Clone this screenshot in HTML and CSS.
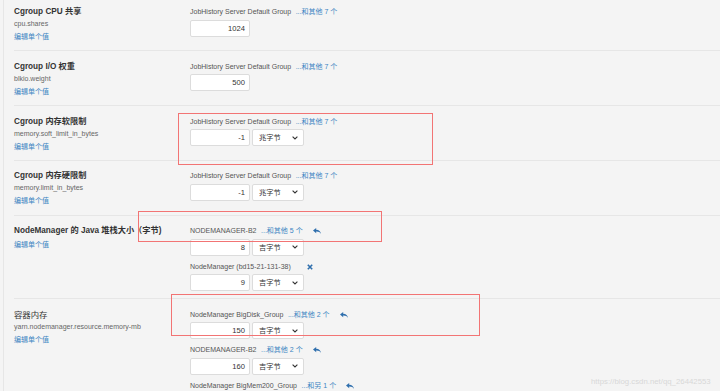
FILE: index.html
```html
<!DOCTYPE html>
<html lang="zh">
<head>
<meta charset="utf-8">
<title>配置</title>
<link rel="stylesheet" href="styles.css">
</head>
<body>
<div class="page">
  <div class="list">
    <div class="row">
      <div class="meta">
        <div class="title">Cgroup CPU 共享</div>
        <div class="key">cpu.shares</div>
        <a class="edit">编辑单个值</a>
      </div>
      <div class="values">
        <div class="entry">
          <div class="elabel"><span class="gname">JobHistory Server Default Group</span><a class="more">...和其他 7 个</a></div>
          <div class="controls"><div class="num">1024</div></div>
        </div>
      </div>
    </div>

    <div class="row">
      <div class="meta">
        <div class="title">Cgroup I/O 权重</div>
        <div class="key">blkio.weight</div>
        <a class="edit">编辑单个值</a>
      </div>
      <div class="values">
        <div class="entry">
          <div class="elabel"><span class="gname">JobHistory Server Default Group</span><a class="more">...和其他 7 个</a></div>
          <div class="controls"><div class="num">500</div></div>
        </div>
      </div>
    </div>

    <div class="row">
      <div class="meta">
        <div class="title">Cgroup 内存软限制</div>
        <div class="key">memory.soft_limit_in_bytes</div>
        <a class="edit">编辑单个值</a>
      </div>
      <div class="values">
        <div class="entry">
          <div class="elabel"><span class="gname">JobHistory Server Default Group</span><a class="more">...和其他 7 个</a></div>
          <div class="controls"><div class="num">-1</div><div class="sel">兆字节<svg class="chev" viewBox="0 0 6 4" width="6" height="4"><path d="M0.6 0.6 L3 3 L5.4 0.6" fill="none" stroke="#333" stroke-width="1.1"/></svg></div></div>
        </div>
      </div>
    </div>

    <div class="row">
      <div class="meta">
        <div class="title">Cgroup 内存硬限制</div>
        <div class="key">memory.limit_in_bytes</div>
        <a class="edit">编辑单个值</a>
      </div>
      <div class="values">
        <div class="entry">
          <div class="elabel"><span class="gname">JobHistory Server Default Group</span><a class="more">...和其他 7 个</a></div>
          <div class="controls"><div class="num">-1</div><div class="sel">兆字节<svg class="chev" viewBox="0 0 6 4" width="6" height="4"><path d="M0.6 0.6 L3 3 L5.4 0.6" fill="none" stroke="#333" stroke-width="1.1"/></svg></div></div>
        </div>
      </div>
    </div>

    <div class="row">
      <div class="meta">
        <div class="title">NodeManager 的 Java 堆栈大小（字节)</div>
        <a class="edit tight">编辑单个值</a>
      </div>
      <div class="values">
        <div class="entry">
          <div class="elabel"><span class="gname">NODEMANAGER-B2</span><a class="more">...和其他 5 个</a><svg class="ico reply" viewBox="0 0 8 6" width="8" height="6"><path d="M3.2 0 L0 2.6 L3.2 5.2 V3.5 C5.4 3.4 6.9 4.1 8 6 C7.7 3.2 6 1.8 3.2 1.7 Z" fill="#2f6fad"/></svg></div>
          <div class="controls"><div class="num">8</div><div class="sel">吉字节<svg class="chev" viewBox="0 0 6 4" width="6" height="4"><path d="M0.6 0.6 L3 3 L5.4 0.6" fill="none" stroke="#333" stroke-width="1.1"/></svg></div></div>
        </div>
        <div class="entry">
          <div class="elabel"><span class="gname">NodeManager (bd15-21-131-38)</span><svg class="ico close" viewBox="0 0 6 6" width="6" height="6"><path d="M0.8 0.8 L5.2 5.2 M5.2 0.8 L0.8 5.2" fill="none" stroke="#2f6fad" stroke-width="1.6"/></svg></div>
          <div class="controls"><div class="num">9</div><div class="sel">吉字节<svg class="chev" viewBox="0 0 6 4" width="6" height="4"><path d="M0.6 0.6 L3 3 L5.4 0.6" fill="none" stroke="#333" stroke-width="1.1"/></svg></div></div>
        </div>
      </div>
    </div>

    <div class="row">
      <div class="meta">
        <div class="title plain">容器内存</div>
        <div class="key">yarn.nodemanager.resource.memory-mb</div>
        <a class="edit">编辑单个值</a>
      </div>
      <div class="values">
        <div class="entry">
          <div class="elabel"><span class="gname">NodeManager BigDisk_Group</span><a class="more">...和其他 2 个</a><svg class="ico reply" viewBox="0 0 8 6" width="8" height="6"><path d="M3.2 0 L0 2.6 L3.2 5.2 V3.5 C5.4 3.4 6.9 4.1 8 6 C7.7 3.2 6 1.8 3.2 1.7 Z" fill="#2f6fad"/></svg></div>
          <div class="controls"><div class="num">150</div><div class="sel">吉字节<svg class="chev" viewBox="0 0 6 4" width="6" height="4"><path d="M0.6 0.6 L3 3 L5.4 0.6" fill="none" stroke="#333" stroke-width="1.1"/></svg></div></div>
        </div>
        <div class="entry">
          <div class="elabel"><span class="gname">NODEMANAGER-B2</span><a class="more">...和其他 2 个</a><svg class="ico reply" viewBox="0 0 8 6" width="8" height="6"><path d="M3.2 0 L0 2.6 L3.2 5.2 V3.5 C5.4 3.4 6.9 4.1 8 6 C7.7 3.2 6 1.8 3.2 1.7 Z" fill="#2f6fad"/></svg></div>
          <div class="controls"><div class="num">160</div><div class="sel">吉字节<svg class="chev" viewBox="0 0 6 4" width="6" height="4"><path d="M0.6 0.6 L3 3 L5.4 0.6" fill="none" stroke="#333" stroke-width="1.1"/></svg></div></div>
        </div>
        <div class="entry">
          <div class="elabel"><span class="gname">NodeManager BigMem200_Group</span><a class="more">...和另 1 个</a><svg class="ico reply" viewBox="0 0 8 6" width="8" height="6"><path d="M3.2 0 L0 2.6 L3.2 5.2 V3.5 C5.4 3.4 6.9 4.1 8 6 C7.7 3.2 6 1.8 3.2 1.7 Z" fill="#2f6fad"/></svg></div>
          <div class="controls"><div class="num"></div><div class="sel"></div></div>
        </div>
      </div>
    </div>
  </div>

  <div class="mark mark1"></div>
  <div class="mark mark2"></div>
  <div class="mark mark3"></div>
  <div class="watermark">https://blog.csdn.net/qq_26442553</div>
</div>
</body>
</html>
```

FILE: styles.css
```css
html, body {
  margin: 0;
  padding: 0;
  background: #f4f4f4;
  overflow: hidden;
}

body {
  width: 720px;
  height: 391px;
  font-family: "Liberation Sans", Arial, "Noto Sans CJK SC", sans-serif;
  color: #333;
}

.page {
  position: relative;
  width: 720px;
  height: 391px;
  overflow: hidden;
  padding-left: 3px;
  box-sizing: border-box;
}

.list {
  border-left: 1px solid #e6e6e6;
  padding-left: 10px;
  margin-top: -3.5px;
  min-height: 400px;
}

.row {
  display: grid;
  grid-template-columns: 176px 1fr;
  padding: 9.5px 0 7.3px;
  border-bottom: 1px solid #e6e6e6;
  align-items: start;
}

.meta {
  display: flex;
  flex-direction: column;
  align-items: flex-start;
}

.title {
  font-size: 8.2px;
  font-weight: bold;
  line-height: 12px;
  color: #333;
  white-space: nowrap;
}

.title.plain {
  font-weight: normal;
  font-size: 8.4px;
}

.key {
  font-size: 7px;
  line-height: 11px;
  color: #666;
  white-space: nowrap;
}

.edit {
  font-size: 7px;
  line-height: 12px;
  margin-top: 2px;
  color: #3b84c2;
}

.edit.tight {
  margin-top: 1.5px;
}

.values {
  display: flex;
  flex-direction: column;
  gap: 5px;
}

.entry {
  display: flex;
  flex-direction: column;
  gap: 1.5px;
}

.elabel {
  display: flex;
  align-items: center;
  height: 12px;
  font-size: 7px;
  line-height: 12px;
  white-space: nowrap;
}

.gname {
  color: #555;
}

.more {
  color: #3b84c2;
  margin-left: 4.5px;
}

.ico {
  display: block;
}

.reply {
  margin-left: 10px;
}

.close {
  margin-left: 16px;
}

.controls {
  display: flex;
  gap: 2px;
}

.num {
  width: 60px;
  height: 17px;
  box-sizing: border-box;
  background: #fff;
  border: 1px solid #dcdcdc;
  border-radius: 2px;
  font-size: 7.6px;
  line-height: 15px;
  text-align: right;
  padding-right: 4px;
  color: #333;
}

.sel {
  width: 52px;
  height: 17px;
  box-sizing: border-box;
  background: #fff;
  border: 1px solid #dcdcdc;
  border-radius: 2px;
  font-size: 7.2px;
  line-height: 15px;
  padding-left: 6px;
  padding-right: 5px;
  display: flex;
  align-items: center;
  justify-content: space-between;
  color: #333;
}

.mark {
  position: absolute;
  border: 1.3px solid #f27474;
  box-sizing: border-box;
}

.mark1 {
  left: 178px;
  top: 113px;
  width: 255px;
  height: 52px;
}

.mark2 {
  left: 138px;
  top: 211px;
  width: 244px;
  height: 31px;
}

.mark3 {
  left: 171px;
  top: 294px;
  width: 309px;
  height: 42px;
}

.watermark {
  position: absolute;
  left: 591px;
  top: 377px;
  font-size: 7.8px;
  line-height: 10px;
  color: #d8d8d8;
  white-space: nowrap;
}
```
